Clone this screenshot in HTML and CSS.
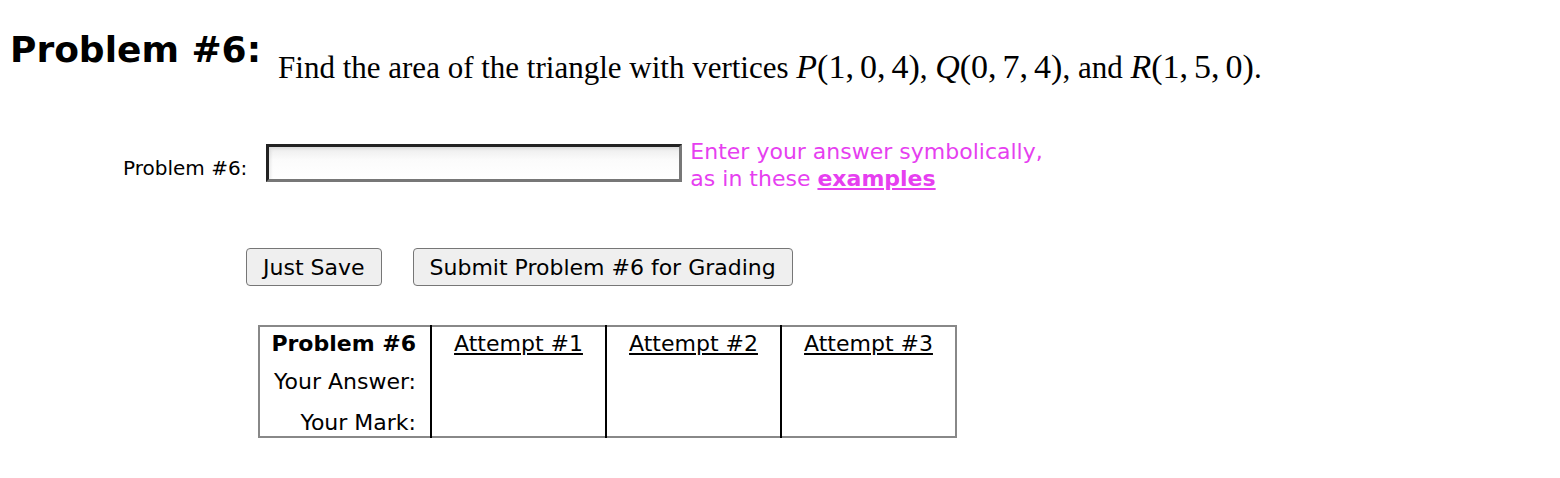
FILE: index.html
```html
<!DOCTYPE html>
<html>
<head>
<meta charset="utf-8">
<link rel="stylesheet" href="styles.css">
</head>
<body>
<div class="problem-head">
  <h2 class="title">Problem #6:</h2>
  <p class="statement">Find the area of the triangle with vertices <span class="m"><i>P</i>(1<span class="c">,</span>0<span class="c">,</span>4)</span>, <span class="m"><i>Q</i>(0<span class="c">,</span>7<span class="c">,</span>4)</span>, and <span class="m"><i>R</i>(1<span class="c">,</span>5<span class="c">,</span>0)</span>.</p>
</div>

<div class="answer-row">
  <label class="answer-label">Problem #6:</label>
  <input class="answer-input" type="text">
  <div class="hint">Enter your answer symbolically,<br>as in these <a href="#" class="hint-link">examples</a></div>
</div>

<div class="buttons">
  <button class="btn btn-save">Just Save</button>
  <button class="btn btn-submit">Submit Problem #6 for Grading</button>
</div>

<table class="attempts">
  <tr class="r1">
    <th class="rowhead">Problem #6</th>
    <td class="att"><a href="#">Attempt #1</a></td>
    <td class="att"><a href="#">Attempt #2</a></td>
    <td class="att"><a href="#">Attempt #3</a></td>
  </tr>
  <tr class="r2">
    <td class="rowhead plain">Your Answer:</td>
    <td class="att"></td>
    <td class="att"></td>
    <td class="att"></td>
  </tr>
  <tr class="r3">
    <td class="rowhead plain">Your Mark:</td>
    <td class="att"></td>
    <td class="att"></td>
    <td class="att"></td>
  </tr>
</table>
</body>
</html>
```
FILE: styles.css
```css
html, body {
  margin: 0;
  padding: 0;
  background: #fff;
}
body {
  font-family: "DejaVu Sans", Verdana, sans-serif;
  color: #000;
}
.problem-head {
  box-sizing: border-box;
  display: flex;
  align-items: flex-start;
  padding: 30px 0 0 10px;
  height: 110px;
}
.title {
  margin: 0;
  font-size: 36px;
  font-weight: bold;
  line-height: 40px;
  white-space: nowrap;
}
.statement {
  margin: 0 0 0 17px;
  padding-top: 20.5px;
  font-family: "Liberation Serif", "Times New Roman", serif;
  font-size: 31px;
  line-height: 32px;
  white-space: nowrap;
}
.statement .m {
  font-size: 34px;
}
.statement .c {
  margin: 0 6px 0 0;
}
.answer-row {
  display: flex;
  align-items: center;
  margin-top: 24px;
  padding-left: 123px;
}
.answer-label {
  font-size: 20px;
  margin-right: 19px;
  padding-top: 10px;
}
.answer-input {
  box-sizing: border-box;
  width: 416px;
  height: 38px;
  margin: 0;
  border-style: solid;
  border-width: 3px;
  border-color: #222 #777 #777 #222;
  background: linear-gradient(#ececec, #fbfbfb 40%, #fff);
  box-shadow: inset 2px 2px 3px rgba(0,0,0,0.08);
}
.hint {
  margin-left: 8px;
  padding-top: 4px;
  color: #e63ff0;
  font-size: 22px;
  line-height: 27px;
}
.hint-link {
  color: #e63ff0;
  font-weight: bold;
}
.buttons {
  display: flex;
  gap: 31px;
  margin-top: 56px;
  padding-left: 246px;
}
.btn {
  box-sizing: border-box;
  height: 38px;
  padding: 0 16px;
  font-family: "DejaVu Sans", Verdana, sans-serif;
  font-size: 22px;
  color: #000;
  background: #efefef;
  border: 1.5px solid #767676;
  border-radius: 4px;
}
.attempts {
  margin: 39px 0 0 258px;
  border: 2px solid #888;
  border-collapse: collapse;
  font-size: 22px;
  line-height: 27px;
}
.attempts tr {
  height: 36px;
}
.attempts tr.r3 {
  height: 39px;
}
.attempts th, .attempts td {
  padding: 0;
}
.r1 th, .r1 td {
  vertical-align: top;
  padding-top: 3px;
}
.r2 td {
  vertical-align: middle;
  padding-top: 2px;
}
.r3 td {
  vertical-align: bottom;
}
.rowhead {
  width: 156px;
  padding-right: 14px !important;
  text-align: right;
  border-right: 2px solid #000;
}
.plain {
  font-weight: normal;
}
.att {
  width: 173px;
  text-align: center;
  border-right: 2px solid #000;
}
.att:last-child {
  border-right: none;
}
.att a {
  color: #000;
}
```
